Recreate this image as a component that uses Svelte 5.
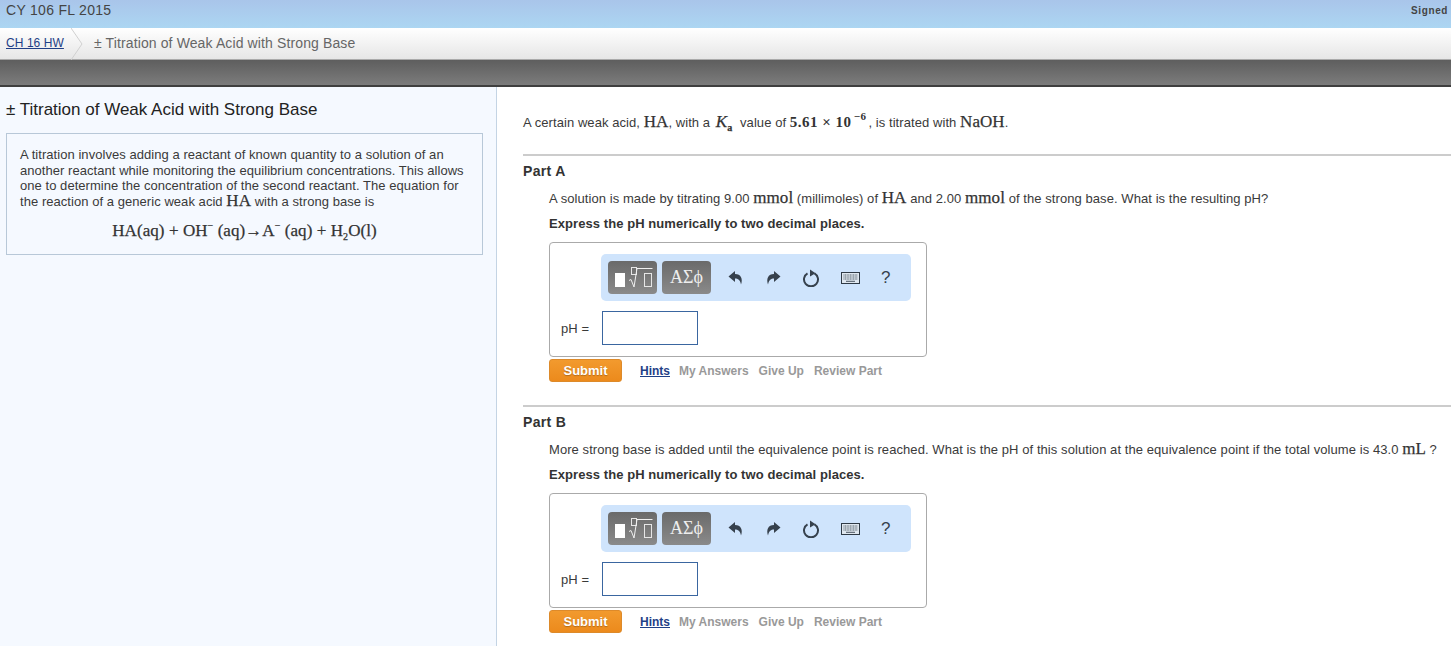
<script lang="ts">
  const parts = [
    { id: 'A', kind: 'a' },
    { id: 'B', kind: 'b' }
  ];
  const links = ['My Answers', 'Give Up', 'Review Part'];
</script>

{#snippet answerBox()}
  <div class="answer">
    <div class="toolbar">
      <div class="tool-btn templates">
        <svg width="49" height="33" viewBox="0 0 49 33" fill="none">
          <rect x="7" y="12" width="10" height="14" fill="#fff" />
          <rect x="23.500" y="6.500" width="5" height="7" stroke="#e6e6e6" />
          <path d="M21 19.500l2-1l3 7.500l3-18.500h15.500" stroke="#f0f0f0" />
          <rect x="36.500" y="12.500" width="7" height="13" stroke="#e6e6e6" />
        </svg>
      </div>
      <div class="tool-btn symbols">ΑΣϕ</div>
      <div class="tool-icons">
        <svg class="ic" width="16" height="16" viewBox="0 0 16 16">
          <path d="M7 1L.5 6.500L7 12V8.500c3 0 5 1.200 6 6c2-5.500 0-10.500-6-10.500z" fill="#36414d" />
        </svg>
        <svg class="ic" width="16" height="16" viewBox="0 0 16 16">
          <path d="M9 1L15.500 6.500L9 12V8.500c-3 0-5 1.200-6 6c-2-5.500 0-10.500 6-10.500z" fill="#36414d" />
        </svg>
        <svg class="ic" width="18" height="18" viewBox="0 0 18 18" fill="none">
          <path d="M5.500 4.300a7 7 0 1 0 7 0" stroke="#36414d" stroke-width="2" />
          <path d="M8 .5L13.500 4.200L8 7.500z" fill="#36414d" />
        </svg>
        <svg class="ic" width="19" height="12" viewBox="0 0 19 12" fill="none">
          <rect x=".5" y=".5" width="18" height="11" fill="#dfe7ef" stroke="#2f3a46" />
          <path d="M2.500 3h14M2.500 5h14M2.500 7h14" stroke="#4a5661" stroke-dasharray="1 .6" />
          <path d="M5 9.300h9" stroke="#4a5661" />
        </svg>
        <span class="help">?</span>
      </div>
    </div>
    <div class="input-row">
      <span class="ph">pH =</span>
      <div class="field"></div>
    </div>
  </div>
{/snippet}

<div class="page">
  <header class="course">
    <span>CY 106 FL 2015</span>
    <span class="signed">Signed</span>
  </header>
  <nav class="crumbs">
    <a href="#hw" class="crumb-link">CH 16 HW</a>
    <svg class="chevron" width="12" height="32" viewBox="0 0 12 32" fill="none">
      <path d="M0 0L11 16L0 32" stroke="#d0d0d0" />
    </svg>
    <span class="crumb-title">± Titration of Weak Acid with Strong Base</span>
  </nav>
  <div class="dark-band"></div>

  <main class="layout">
    <aside class="intro">
      <h2>± Titration of Weak Acid with Strong Base</h2>
      <div class="intro-box">
        <p>
          A titration involves adding a reactant of known quantity to a solution of an
          another reactant while monitoring the equilibrium concentrations. This allows
          one to determine the concentration of the second reactant. The equation for
          the reaction of a generic weak acid <span class="m">HA</span> with a strong base is
        </p>
        <div class="equation">HA(aq) + OH<sup>−</sup> (aq)→A<sup>−</sup> (aq) + H<sub>2</sub>O(l)</div>
      </div>
    </aside>

    <section class="content">
      <p class="lead">
        A certain weak acid, <span class="m">HA</span>, with a <span class="m ka-wrap"><i>K</i><sub class="ka">a</sub></span>
        value of <span class="m b">5.61 × 10<sup class="exp">−6</sup></span>, is titrated with <span class="m">NaOH</span>.
      </p>

      {#each parts as part}
        <article class="part">
          <h3>Part {part.id}</h3>
          <div class="part-body">
            {#if part.kind === 'a'}
              <p class="question">
                A solution is made by titrating 9.00 <span class="m">mmol</span> (millimoles) of <span class="m">HA</span> and 2.00 <span class="m">mmol</span> of the strong base. What is the resulting pH?
              </p>
            {:else}
              <p class="question">
                More strong base is added until the equivalence point is reached. What is the pH of this solution at the equivalence point if the total volume is 43.0 <span class="m">mL</span> ?
              </p>
            {/if}
            <p class="express">Express the pH numerically to two decimal places.</p>
            {@render answerBox()}
            <div class="actions">
              <button type="button" class="submit">Submit</button>
              <a href="#hints" class="hints">Hints</a>
              {#each links as link}
                <span class="muted">{link}</span>
              {/each}
            </div>
          </div>
        </article>
      {/each}
    </section>
  </main>
</div>

<style>
  :global(body) {
    margin: 0;
    background: #fff;
  }
  .page {
    height: 646px;
    overflow: hidden;
    font-family: "Liberation Sans", Arial, sans-serif;
    color: #3a3a3a;
    font-size: 13px;
    letter-spacing: 0.07px;
    display: flex;
    flex-direction: column;
  }
  .course {
    height: 28px;
    flex: none;
    box-sizing: border-box;
    padding: 2px 3px 0 6px;
    display: flex;
    justify-content: space-between;
    background: linear-gradient(to bottom, #a9c5ea, #acd6f2);
    font-size: 14px;
    line-height: 16px;
    letter-spacing: 0.3px;
    color: #444;
  }
  .signed {
    font-size: 10px;
    font-weight: 700;
    letter-spacing: 0.6px;
    padding-top: 1px;
  }
  .crumbs {
    height: 32px;
    flex: none;
    display: flex;
    align-items: center;
    padding: 0 0 2px 6px;
    background: linear-gradient(to bottom, #fff, #e6e6e6);
    box-sizing: border-box;
    border-bottom: 1px solid #aaa;
  }
  .crumb-link {
    color: #1f3f86;
    font-size: 12px;
    width: 65px;
  }
  .chevron {
    flex: none;
    margin-bottom: -2px;
  }
  .crumb-title {
    margin-left: 11px;
    font-size: 14px;
    letter-spacing: 0.12px;
    color: #666;
  }
  .dark-band {
    height: 27px;
    flex: none;
    box-sizing: border-box;
    background: linear-gradient(to bottom, #5e5e5e, #7c7c7c);
    border-bottom: 2px solid #3f3f3f;
  }
  .layout {
    flex: 1;
    display: flex;
    min-height: 0;
  }
  .intro {
    width: 497px;
    flex: none;
    box-sizing: border-box;
    background: #f5f9ff;
    border-right: 1px solid #c4d4e4;
    padding: 13px 13px 0 6px;
  }
  h2 {
    margin: 0;
    font-size: 17px;
    font-weight: 400;
    line-height: 20px;
    letter-spacing: 0;
    color: #222;
  }
  .intro-box {
    margin-top: 13px;
    border: 1px solid #b8c8d8;
    padding: 13px 13px 9px;
    height: 122px;
    box-sizing: border-box;
  }
  .intro-box p {
    margin: 0;
    line-height: 15.700px;
    letter-spacing: 0.05px;
  }
  .intro-box .m {
    line-height: 12px;
  }
  .m {
    font-family: "Liberation Serif", "Times New Roman", serif;
    font-size: 17px;
    line-height: 1;
    color: #333;
    -webkit-text-stroke: 0.25px #333;
  }
  .ka-wrap {
    margin: 0 4px 0 2px;
  }
  .b {
    font-weight: 700;
    font-size: 15px;
    letter-spacing: 0.5px;
    -webkit-text-stroke: 0;
  }
  .equation {
    margin-top: 11px;
    text-align: center;
    font-family: "Liberation Serif", serif;
    font-size: 17px;
    letter-spacing: 0.07px;
    line-height: 20px;
    color: #333;
    -webkit-text-stroke: 0.25px #333;
  }
  sup, sub {
    font-size: 10px;
    line-height: 0;
  }
  .ka {
    font-size: 10px;
    font-weight: 700;
  }
  .exp {
    font-size: 11px;
    margin: 0 2px;
    position: relative;
    top: -1px;
  }
  .content {
    flex: 1;
    min-width: 0;
    padding: 0 0 0 26px;
  }
  .lead {
    margin: 26px 0 0;
    height: 42px;
    line-height: 18px;
  }
  .part {
    border-top: 2px solid #ccc;
    height: 251px;
    box-sizing: border-box;
  }
  .lead + .part {
    margin-top: -1px;
  }
  h3 {
    margin: 0;
    padding-top: 8px;
    font-size: 14px;
    line-height: 15px;
    letter-spacing: 0.35px;
    color: #333;
  }
  .part-body {
    padding-left: 26px;
  }
  .question {
    margin: 10px 0 0;
    line-height: 18px;
    white-space: nowrap;
  }
  .express {
    margin: 8px 0 0;
    font-weight: 700;
    line-height: 16px;
    color: #333;
  }
  .answer {
    margin-top: 10px;
    width: 378px;
    height: 115px;
    box-sizing: border-box;
    border: 1px solid #aaa;
    border-radius: 4px;
    padding: 11px 15px 0 11px;
  }
  .toolbar {
    margin-left: 40px;
    width: 310px;
    height: 47px;
    box-sizing: border-box;
    background: #cfe4fc;
    border-radius: 5px;
    padding: 7px;
    display: flex;
    gap: 5px;
  }
  .tool-btn {
    height: 33px;
    border-radius: 4px;
    background: linear-gradient(to bottom, #6a6a6a, #8a8a8a);
    display: flex;
    align-items: center;
    justify-content: center;
    color: #eee;
    box-sizing: border-box;
  }
  .templates {
    width: 49px;
  }
  .symbols {
    width: 49px;
    font-family: "Liberation Serif", serif;
    font-size: 18px;
    letter-spacing: 0;
  }
  .tool-icons {
    flex: 1;
    display: flex;
    align-items: center;
    gap: 21px;
    padding-left: 12px;
  }
  .help {
    font-size: 17px;
    color: #36414d;
  }
  .input-row {
    margin-top: 10px;
    display: flex;
    align-items: center;
    gap: 13px;
  }
  .field {
    width: 96px;
    height: 34px;
    box-sizing: border-box;
    border: 1px solid #3a66a0;
    background: #fff;
  }
  .actions {
    margin-top: 2px;
    display: flex;
    align-items: center;
    height: 23px;
    gap: 10px;
    font-size: 12px;
    letter-spacing: 0;
    font-weight: 700;
  }
  .submit {
    width: 73px;
    height: 23px;
    padding: 0;
    border: 1px solid #dd8a2a;
    border-radius: 3px;
    background: linear-gradient(to bottom, #f29a2e, #ec8a1c);
    color: #fff;
    font: 700 13px "Liberation Sans", Arial, sans-serif;
    text-shadow: 0 1px 1px rgba(0, 0, 0, 0.25);
    margin-right: 8px;
  }
  .hints {
    color: #1f3f86;
    margin-right: -1px;
  }
  .muted {
    color: #999;
  }
</style>
